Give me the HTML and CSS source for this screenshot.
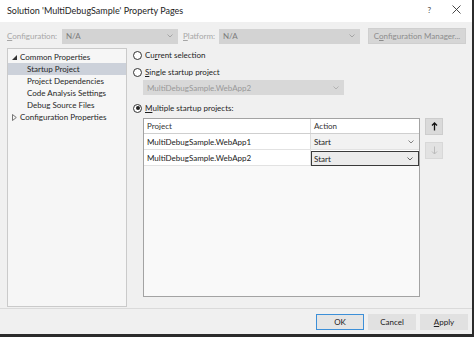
FILE: index.html
```html
<!DOCTYPE html>
<html lang="en">
<head>
    <meta charset="UTF-8">
    <title>Property Pages</title>
    <link rel="stylesheet" href="styles.css">
</head>
<body>
    <div class="window">
        <div class="titlebar">
            <span class="title">Solution 'MultiDebugSample' Property Pages</span>
            <span class="help">?</span>
            <svg class="close" width="9" height="9" viewBox="0 0 9 9"><path d="M0.5 0.5 L8.5 8.5 M8.5 0.5 L0.5 8.5" stroke="#333" stroke-width="0.9"/></svg>
        </div>

        <div class="toolbar">
            <label class="cfg-label"><u>C</u>onfiguration:</label>
            <div class="combo combo-cfg">N/A<svg class="chev" width="6" height="4" viewBox="0 0 6 4"><path d="M0.5 0.5 L3 3 L5.5 0.5" fill="none" stroke="#999" stroke-width="0.8"/></svg></div>
            <label class="plat-label"><u>P</u>latform:</label>
            <div class="combo combo-plat">N/A<svg class="chev" width="6" height="4" viewBox="0 0 6 4"><path d="M0.5 0.5 L3 3 L5.5 0.5" fill="none" stroke="#999" stroke-width="0.8"/></svg></div>
            <button class="cfg-manager">C<u>o</u>nfiguration Manager...</button>
        </div>

        <div class="main">
            <div class="tree">
                <div class="node"><svg class="twisty" width="5" height="5" viewBox="0 0 5 5"><path d="M5 0 L5 5 L0 5 Z" fill="#333"/></svg>Common Properties</div>
                <div class="node child selected">Startup Project</div>
                <div class="node child">Project Dependencies</div>
                <div class="node child">Code Analysis Settings</div>
                <div class="node child">Debug Source Files</div>
                <div class="node"><svg class="twisty" width="5" height="7" viewBox="0 0 5 7"><path d="M0.5 0.5 L4.3 3.5 L0.5 6.5 Z" fill="none" stroke="#555" stroke-width="0.8"/></svg>Configuration Properties</div>
            </div>

            <div class="pane">
                <div class="radio-row first"><span class="radio"></span>Cu<u>r</u>rent selection</div>
                <div class="radio-row second"><span class="radio"></span><u>S</u>ingle startup project</div>
                <div class="combo combo-single">MultiDebugSample.WebApp2<svg class="chev" width="6" height="4" viewBox="0 0 6 4"><path d="M0.5 0.5 L3 3 L5.5 0.5" fill="none" stroke="#aaa" stroke-width="0.8"/></svg></div>
                <div class="radio-row third"><span class="radio checked"></span><u>M</u>ultiple startup projects:</div>

                <div class="grid-area">
                    <div class="table">
                        <div class="row head">
                            <div class="cell">Project</div>
                            <div class="cell action">Action</div>
                        </div>
                        <div class="row">
                            <div class="cell">MultiDebugSample.WebApp1</div>
                            <div class="cell action"><div class="action-combo">Start<svg class="chev" width="6" height="4" viewBox="0 0 6 4"><path d="M0.5 0.5 L3 3 L5.5 0.5" fill="none" stroke="#666" stroke-width="0.8"/></svg></div></div>
                        </div>
                        <div class="row">
                            <div class="cell">MultiDebugSample.WebApp2</div>
                            <div class="cell action"><div class="action-combo focused">Start<svg class="chev" width="6" height="4" viewBox="0 0 6 4"><path d="M0.5 0.5 L3 3 L5.5 0.5" fill="none" stroke="#444" stroke-width="0.8"/></svg></div></div>
                        </div>
                    </div>
                    <div class="move-buttons">
                        <div class="move up"><svg width="7" height="9" viewBox="0 0 7 9"><path d="M3.5 1 L3.5 8.5 M1 3.5 L3.5 1 L6 3.5" fill="none" stroke="#111" stroke-width="1.3"/></svg></div>
                        <div class="move down"><svg width="7" height="9" viewBox="0 0 7 9"><path d="M3.5 0.5 L3.5 8 M1 5.5 L3.5 8 L6 5.5" fill="none" stroke="#bbb" stroke-width="1"/></svg></div>
                    </div>
                </div>
            </div>
        </div>

        <div class="footer">
            <button class="btn default">OK</button>
            <button class="btn">Cancel</button>
            <button class="btn"><u>A</u>pply</button>
        </div>
    </div>
</body>
</html>
```

FILE: styles.css
```css
body {
    margin: 0;
    width: 474px;
    height: 337px;
    background-color: #2b2b2b;
    font-family: Lato, "Noto Sans", sans-serif;
    font-size: 8px;
    color: #1e1e1e;
    overflow: hidden;
}

u {
    text-decoration-thickness: 0.5px;
    text-underline-offset: 1px;
}

.window {
    width: 472px;
    height: 334px;
    background-color: #f0f0f0;
    display: flex;
    flex-direction: column;
}

.titlebar {
    height: 22px;
    background-color: #fff;
    display: flex;
    align-items: center;
    padding-left: 7px;
}

.title {
    flex: 1;
    margin-top: -2px;
    font-size: 9px;
}

.help {
    color: #444;
    margin-right: 21px;
    margin-top: -3px;
}

.close {
    margin-right: 11px;
    margin-top: -3px;
}

.toolbar {
    margin-top: 6px;
    height: 16px;
    display: flex;
    align-items: center;
    padding-left: 7px;
    color: #a6a6a6;
}

.cfg-label {
    width: 55px;
}

.plat-label {
    width: 36px;
    margin-left: 5px;
}

.combo {
    height: 15px;
    box-sizing: border-box;
    background-color: #d3d3d3;
    display: flex;
    align-items: center;
    justify-content: space-between;
    padding: 0 5px 0 4px;
    color: #7c7c7c;
}

.combo-cfg {
    width: 116px;
}

.combo-plat {
    width: 141px;
}

.cfg-manager {
    margin-left: 8px;
    width: 98px;
    height: 16px;
    padding: 0;
    border: 1px solid #cfcfcf;
    background-color: #d6d6d6;
    color: #8c8c8c;
    font-family: inherit;
    font-size: 8px;
}

.main {
    margin-top: 4px;
    height: 259px;
    display: flex;
    padding-left: 7px;
}

.tree {
    width: 120px;
    box-sizing: border-box;
    border: 1px solid #cacaca;
    background-color: #f6f6f6;
    padding-top: 2px;
}

.node {
    height: 12px;
    line-height: 12px;
    display: flex;
    align-items: center;
    padding-left: 4px;
    color: #262626;
}

.twisty {
    margin-right: 3px;
}

.node.child {
    padding-left: 19px;
}

.node.selected {
    background-color: #ccd1da;
}

.pane {
    margin-left: 6px;
    flex: 1;
    display: flex;
    flex-direction: column;
}

.radio-row {
    height: 12px;
    display: flex;
    align-items: center;
}

.radio-row.first {
    margin-top: 1px;
}

.radio-row.second {
    margin-top: 5px;
}

.radio-row.third {
    margin-top: 7px;
}

.radio {
    width: 9px;
    height: 9px;
    box-sizing: border-box;
    border: 1px solid #333;
    border-radius: 50%;
    background-color: #fff;
    margin-right: 3px;
    position: relative;
}

.radio.checked::after {
    content: "";
    position: absolute;
    left: 1.5px;
    top: 1.5px;
    width: 4px;
    height: 4px;
    border-radius: 50%;
    background-color: #222;
}

.combo-single {
    margin-top: 2px;
    margin-left: 10px;
    width: 201px;
    background-color: #d8d8d8;
    color: #999;
}

.grid-area {
    margin-top: 4px;
    display: flex;
}

.table {
    margin-left: 10px;
    width: 277px;
    height: 179px;
    box-sizing: border-box;
    border: 1px solid #a3a3a3;
    background-color: #f9f9f9;
}

.row {
    display: grid;
    grid-template-columns: 166px 1fr;
    height: 16px;
    border-bottom: 1px solid #e2e2e2;
    box-sizing: border-box;
    background-color: #fff;
}

.row.head {
    height: 15px;
    border-bottom: 1px solid #cfcfcf;
}

.cell {
    display: flex;
    align-items: center;
    padding-left: 3px;
    color: #222;
}

.head .cell {
    color: #333;
}

.cell.action {
    padding-left: 0;
    border-left: 1px solid #dcdcdc;
}

.head .cell.action {
    padding-left: 3px;
}

.action-combo {
    width: 100%;
    height: 100%;
    box-sizing: border-box;
    display: flex;
    align-items: center;
    justify-content: space-between;
    padding: 0 5px 0 3px;
    background-color: #f2f2f2;
}

.action-combo.focused {
    border: 1px solid #3a3a3a;
    background-color: #ececec;
    padding-left: 2px;
    margin-top: 1px;
    height: 15px;
}

.move-buttons {
    margin-left: 5px;
    display: flex;
    flex-direction: column;
    gap: 7px;
}

.move {
    width: 18px;
    height: 17px;
    box-sizing: border-box;
    display: flex;
    align-items: center;
    justify-content: center;
}

.move.up {
    background-color: #dadada;
    border: 1px solid #cdcdcd;
}

.move.down {
    background-color: #e2e2e2;
    border: 1px solid #d8d8d8;
}

.footer {
    margin-top: 1px;
    border-top: 1px solid #dadada;
    padding: 5px 4px 0 0;
    display: flex;
    justify-content: flex-end;
    gap: 4px;
}

.btn {
    width: 48px;
    height: 16px;
    padding: 0;
    border: 1px solid #e1e1e1;
    background-color: #e1e1e1;
    color: #222;
    font-family: inherit;
    font-size: 8px;
}

.btn.default {
    border-color: #3c8fd8;
    background-color: #e5e5e5;
}
```
